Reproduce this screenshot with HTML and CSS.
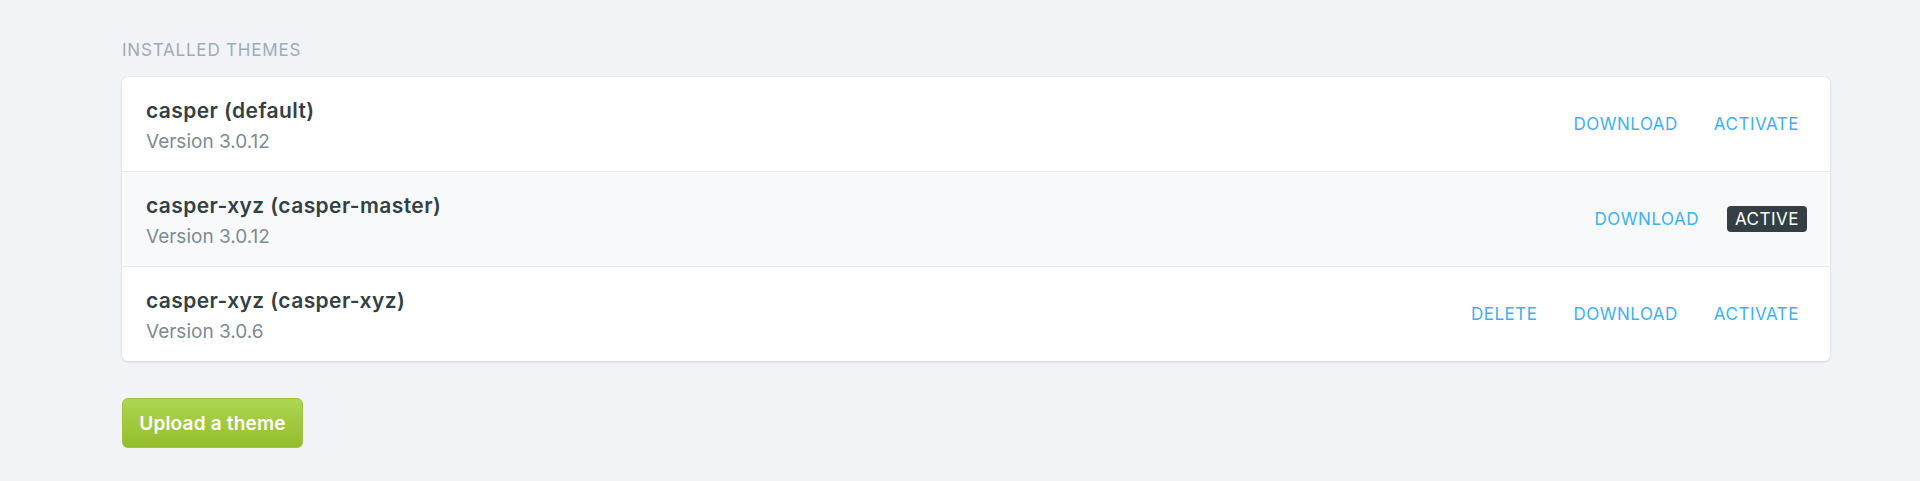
FILE: index.html
```html
<!DOCTYPE html>
<html lang="en">
<head>
    <meta charset="UTF-8">
    <title>Themes</title>
    <link rel="stylesheet" href="styles.css">
</head>
<body>
    <section class="themes">
        <h4 class="themes-label">Installed themes</h4>
        <div class="theme-list">
            <div class="theme-row">
                <div class="theme-info">
                    <h3 class="theme-name">casper (default)</h3>
                    <span class="theme-version">Version 3.0.12</span>
                </div>
                <div class="theme-actions">
                    <a href="#" class="theme-action">Download</a>
                    <a href="#" class="theme-action">Activate</a>
                </div>
            </div>
            <div class="theme-row theme-row-active">
                <div class="theme-info">
                    <h3 class="theme-name">casper-xyz (casper-master)</h3>
                    <span class="theme-version">Version 3.0.12</span>
                </div>
                <div class="theme-actions">
                    <a href="#" class="theme-action">Download</a>
                    <span class="theme-badge">Active</span>
                </div>
            </div>
            <div class="theme-row">
                <div class="theme-info">
                    <h3 class="theme-name">casper-xyz (casper-xyz)</h3>
                    <span class="theme-version">Version 3.0.6</span>
                </div>
                <div class="theme-actions">
                    <a href="#" class="theme-action">Delete</a>
                    <a href="#" class="theme-action">Download</a>
                    <a href="#" class="theme-action">Activate</a>
                </div>
            </div>
        </div>
        <button class="upload-btn">Upload a theme</button>
    </section>
</body>
</html>
```

FILE: styles.css
```css
body {
    margin: 0;
    font-family: Inter, "Noto Sans", sans-serif;
    background-color: #f2f3f7;
    color: #343f44;
}

.themes {
    padding: 38px 90px 0 122px;
}

.themes-label {
    margin: 0 0 15px 0;
    font-size: 17px;
    line-height: 24px;
    font-weight: 400;
    letter-spacing: 0.8px;
    text-transform: uppercase;
    color: #9baeb8;
}

.theme-list {
    background-color: #fff;
    border-radius: 6px;
    box-shadow: 0 0 0 1px rgba(0, 0, 0, 0.02), 0 1px 3px rgba(0, 0, 0, 0.1);
    overflow: hidden;
}

.theme-row {
    display: flex;
    align-items: center;
    justify-content: space-between;
    height: 94px;
    padding: 0 31px 0 24px;
}

.theme-row + .theme-row {
    border-top: 1px solid #e3edf3;
}

.theme-row-active {
    background-color: #f8f9fb;
}

.theme-info {
    display: flex;
    flex-direction: column;
    padding-top: 5px;
}

.theme-name {
    margin: 0;
    font-size: 21px;
    line-height: 24px;
    font-weight: 600;
    letter-spacing: 0.4px;
    color: #343f44;
}

.theme-version {
    margin-top: 7px;
    font-size: 19px;
    line-height: 24px;
    color: #7d8b93;
}

.theme-actions {
    display: flex;
    align-items: center;
    gap: 36px;
}

.theme-action {
    font-size: 17px;
    letter-spacing: 0.5px;
    text-transform: uppercase;
    text-decoration: none;
    color: #3eb0ef;
}

.theme-badge {
    margin: 0 -8px;
    padding: 3px 8px;
    border-radius: 4px;
    background-color: #343f44;
    color: #fff;
    font-size: 17px;
    letter-spacing: 0.5px;
    text-transform: uppercase;
}

.upload-btn {
    margin-top: 37px;
    width: 181px;
    height: 50px;
    border: 1px solid #9cc63a;
    border-radius: 6px;
    background: linear-gradient(#acd553, #94bd2b);
    box-shadow: 0 1px 0 rgba(0, 0, 0, 0.06);
    color: #fff;
    font-family: Inter, "Noto Sans", sans-serif;
    font-size: 19px;
    font-weight: 600;
    letter-spacing: 0.2px;
    cursor: pointer;
}
```
